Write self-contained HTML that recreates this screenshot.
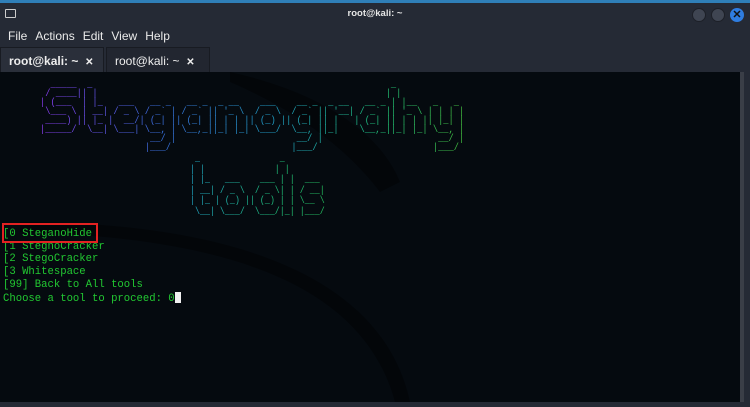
<!DOCTYPE html>
<html><head><style>
*{margin:0;padding:0;box-sizing:border-box}
body{width:750px;height:407px;background:#252a35;overflow:hidden;position:relative;font-family:"Liberation Sans",sans-serif}
.top{position:absolute;left:0;top:0;width:750px;height:3px;background:#2f7fb8}
.title{position:absolute;top:8px;left:0;width:750px;text-align:center;color:#e6e6e6;font-size:9.5px;font-weight:bold}
.ticon{position:absolute;left:5px;top:9px;width:11px;height:9px;border:1px solid #ccc;border-radius:1px}
.btn{position:absolute;top:8px;width:14px;height:14px;border-radius:50%;background:#3f4552;border:1px solid #1d2028}
.menu{position:absolute;top:29px;left:8px;color:#eaeaea;font-size:12px;word-spacing:4px}
.menu span{margin-right:8px}
.tab{position:absolute;top:47px;height:25px;border:1px solid #181b22;border-bottom:none;color:#eee;font-size:12px;padding:6px 0 0 8px}
.term{position:absolute;left:0;top:72px;width:740px;height:330px;background:#050a0f;overflow:hidden}
.sb{position:absolute;left:740px;top:72px;width:4px;height:330px;background:#3a3e47}
pre{position:absolute;font-family:"Liberation Mono",monospace;margin:0}
.art{font-size:10.4px;transform-origin:0 0;-webkit-background-clip:text;background-clip:text;color:transparent}
.a1{background-image:linear-gradient(90deg,#8a3cf0 0%,#3a70e0 28%,#20a0c8 55%,#1fc07a 80%,#45c040 100%)}
.a2{background-image:linear-gradient(90deg,#22a8c8 0%,#20c080 60%,#25c060 100%)}
.txt{left:3px;top:228px;font-size:10.6px;line-height:12.7px;color:#22c832}
.cur{display:inline-block;width:6px;height:11px;background:#f0f0f0;vertical-align:-2px}
.red{position:absolute;left:2px;top:223px;width:96px;height:20px;border:2px solid #e32222}
</style></head><body>
<div class="top"></div>
<div class="ticon"></div>
<div class="title">root@kali: ~</div>
<div class="btn" style="left:692px"></div>
<div class="btn" style="left:711px"></div>
<div class="btn" style="left:730px;background:#2f7de0;border-color:#2f7de0;color:#111;font-size:11px;font-weight:bold;text-align:center;line-height:12px">✕</div>
<div class="menu"><span>File</span><span>Actions</span><span>Edit</span><span>View</span><span>Help</span></div>
<div class="tab" style="left:0;width:104px;background:#2a2f3a;font-weight:bold">root@kali: ~ &nbsp;<b style="font-size:10px">✕</b></div>
<div class="tab" style="left:106px;width:104px;background:#222630">root@kali: ~ &nbsp;<b style="font-size:10px">✕</b></div>
<div class="term">
<svg width="740" height="330" style="position:absolute;left:0;top:0">
<path d="M230 0 C320 20 380 60 400 110 L380 120 C350 80 300 40 230 10Z" fill="#000" opacity=".35"/>
<path d="M20 150 C200 150 380 190 410 330 L395 330 C360 200 200 165 20 160Z" fill="#000" opacity=".35"/>
</svg>
<pre class="art a1" style="left:40px;top:9px;line-height:9px;transform:scaleX(0.84)">  _____  _                                                         _            
 / ____|| |                                                       | |           
| (___  | |_   ___   __ _   __ _  _ __    ___    __ _  _ __   __ _ | |__   _   _ 
 \___ \ | __| / _ \ / _` | / _` || '_ \  / _ \  / _` || '__| / _` || '_ \ | | | |
 ____) || |_ |  __/| (_| || (_| || | | || (_) || (_| || |   | (_| || | | || |_| |
|_____/  \__| \___| \__, | \__,_||_| |_| \___/  \__, ||_|    \__,_||_| |_| \__, |
                     __/ |                       __/ |                      __/ |
                    |___/                       |___/                      |___/ </pre>
<pre class="art a2" style="left:190px;top:82px;line-height:10.6px;transform:scaleX(0.8)"> _                _       
| |              | |      
| |_   ___    ___ | |  ___ 
| __| / _ \  / _ \| | / __|
| |_ | (_) || (_) | | \__ \
 \__| \___/  \___/|_| |___/</pre>
</div>
<div class="sb"></div>
<pre class="txt">[0 SteganoHide
[1 StegnoCracker
[2 StegoCracker
[3 Whitespace
[99] Back to All tools
Choose a tool to proceed: 0<span class="cur"></span></pre>
<div class="red"></div>
</body></html>
